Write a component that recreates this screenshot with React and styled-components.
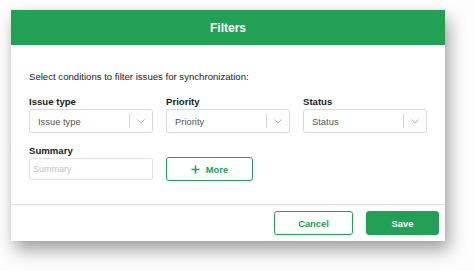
import React from 'react';
import styled, { createGlobalStyle } from 'styled-components';

const green = '#21a056';

const GlobalStyle = createGlobalStyle`
  html, body {
    margin: 0;
    padding: 0;
    background: #ffffff;
    font-family: 'Liberation Sans', Arial, sans-serif;
  }
`;

const Page = styled.div`
  width: 474px;
  height: 271px;
  padding: 10px 0 0 11px;
  box-sizing: border-box;
  background: #fdfdfd;
`;

const Dialog = styled.div`
  width: 434px;
  height: 231px;
  background: #ffffff;
  display: flex;
  flex-direction: column;
  box-shadow: 4px 9px 16px rgba(0, 0, 0, 0.36), 0 0 3px rgba(0, 0, 0, 0.08);
`;

const Header = styled.div`
  height: 35px;
  background: ${green};
  color: #ffffff;
  font-weight: 700;
  font-size: 12px;
  display: flex;
  align-items: center;
  justify-content: center;
  flex-shrink: 0;
`;

const Body = styled.div`
  flex: 1;
  padding: 26px 18px 0 18px;
  border-bottom: 1px solid #dcdcdc;
`;

const Intro = styled.p`
  margin: 0 0 13px 0;
  font-size: 9.6px;
  line-height: 12px;
  color: #222;
`;

const Grid = styled.div`
  display: grid;
  grid-template-columns: repeat(3, 124px);
  column-gap: 13px;
  row-gap: 12px;
  align-items: end;
`;

const Field = styled.div`
  display: flex;
  flex-direction: column;
`;

const Label = styled.label`
  font-size: 9.6px;
  font-weight: 700;
  color: #1a1a1a;
  line-height: 11px;
  margin-bottom: 2px;
`;

const SelectBox = styled.div`
  height: 24px;
  box-sizing: border-box;
  border: 1px solid #dadada;
  border-radius: 3px;
  display: flex;
  align-items: center;
  padding-left: 8px;
  font-size: 9.4px;
  color: #555;
`;

const SelectText = styled.span`
  flex: 1;
`;

const Divider = styled.span`
  width: 1px;
  height: 14px;
  background: #d4d4d4;
`;

const Chevron = styled.span`
  width: 22px;
  display: flex;
  align-items: center;
  justify-content: center;
`;

const TextInput = styled.div`
  height: 22px;
  box-sizing: border-box;
  border: 1px solid #e3e3e3;
  border-radius: 2px;
  display: flex;
  align-items: center;
  padding-left: 3px;
  font-size: 9px;
  color: #c4c4c4;
  margin-bottom: 1px;
`;

const OutlineButton = styled.button`
  height: 24px;
  width: ${p => p.$width || '87px'};
  box-sizing: border-box;
  border: 1.5px solid ${green};
  border-radius: 3px;
  background: #ffffff;
  color: ${green};
  font-family: inherit;
  font-weight: 700;
  font-size: 9.4px;
  display: flex;
  align-items: center;
  justify-content: center;
  gap: 6px;
  padding: 0;
`;

const SolidButton = styled(OutlineButton)`
  background: ${green};
  color: #ffffff;
`;

const Footer = styled.div`
  height: 36px;
  flex-shrink: 0;
  display: flex;
  align-items: center;
  justify-content: flex-end;
  gap: 13px;
  padding-right: 6px;
`;

const ChevronIcon = () => (
  <svg width="8" height="5" viewBox="0 0 8 5">
    <path d="M0.5 0.5 L4 4 L7.5 0.5" fill="none" stroke="#aaa" strokeWidth="0.9" />
  </svg>
);

const PlusIcon = () => (
  <svg width="9" height="9" viewBox="0 0 9 9">
    <path d="M4.5 0.5 V8.5 M0.5 4.5 H8.5" stroke={green} strokeWidth="1.6" />
  </svg>
);

const Select = ({ placeholder }) => (
  <SelectBox>
    <SelectText>{placeholder}</SelectText>
    <Divider />
    <Chevron><ChevronIcon /></Chevron>
  </SelectBox>
);

const App = () => {
  const selects = ['Issue type', 'Priority', 'Status'];

  return (
    <>
      <GlobalStyle />
      <Page>
        <Dialog>
          <Header>Filters</Header>
          <Body>
            <Intro>Select conditions to filter issues for synchronization:</Intro>
            <Grid>
              {selects.map(name => (
                <Field key={name}>
                  <Label>{name}</Label>
                  <Select placeholder={name} />
                </Field>
              ))}
              <Field>
                <Label>Summary</Label>
                <TextInput>Summary</TextInput>
              </Field>
              <OutlineButton>
                <PlusIcon />
                More
              </OutlineButton>
            </Grid>
          </Body>
          <Footer>
            <OutlineButton $width="79px">Cancel</OutlineButton>
            <SolidButton $width="73px">Save</SolidButton>
          </Footer>
        </Dialog>
      </Page>
    </>
  );
};

export default App;
